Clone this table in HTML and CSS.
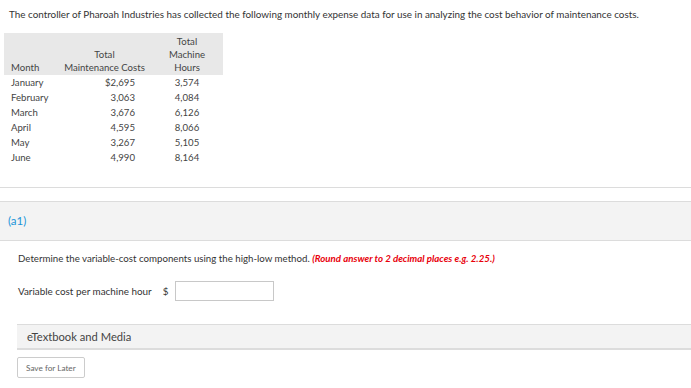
FILE: index.html
```html
<!DOCTYPE html>
<html lang="en">
<head>
    <meta charset="UTF-8">
    <title>Question</title>
    <link rel="stylesheet" href="styles.css">
</head>
<body>
    <div class="question">
        <p class="intro">The controller of Pharoah Industries has collected the following monthly expense data for use in analyzing the cost behavior of maintenance costs.</p>

        <table class="data">
            <thead>
                <tr>
                    <th class="month">Month</th>
                    <th class="costs">Total<br>Maintenance Costs</th>
                    <th class="hours">Total<br>Machine<br>Hours</th>
                </tr>
            </thead>
            <tbody>
                <tr><td>January</td><td class="num">$2,695</td><td class="mid">3,574</td></tr>
                <tr><td>February</td><td class="num">3,063</td><td class="mid">4,084</td></tr>
                <tr><td>March</td><td class="num">3,676</td><td class="mid">6,126</td></tr>
                <tr><td>April</td><td class="num">4,595</td><td class="mid">8,066</td></tr>
                <tr><td>May</td><td class="num">3,267</td><td class="mid">5,105</td></tr>
                <tr><td>June</td><td class="num">4,990</td><td class="mid">8,164</td></tr>
            </tbody>
        </table>
    </div>

    <div class="part">
        <div class="part-head">(a1)</div>
        <div class="part-body">
            <p class="prompt">Determine the variable-cost components using the high-low method. <em class="hint">(Round answer to 2 decimal places e.g. 2.25.)</em></p>
            <div class="answer">
                <label for="varCost">Variable cost per machine hour</label>
                <span class="currency">$</span>
                <input type="text" id="varCost">
            </div>
            <div class="media">eTextbook and Media</div>
            <button class="save">Save for Later</button>
        </div>
    </div>
</body>
</html>
```

FILE: styles.css
```css
body {
    margin: 0;
    font-family: Lato, "Open Sans", sans-serif;
    color: #333;
    background: #fff;
}
.question {
    padding: 9px 0 22px;
    border-bottom: 1px solid #dcdcdc;
}
.intro {
    margin: 0 0 13px 9px;
    font-size: 9.9px;
    line-height: 11px;
}
.data {
    margin-left: 4px;
    border-collapse: collapse;
    font-size: 9.6px;
    color: #444;
}
.data th {
    background: #e8e8e8;
    font-weight: normal;
    line-height: 13px;
    vertical-align: bottom;
    padding: 2px 0 1px;
}
.data th.month {
    text-align: left;
    padding-left: 7px;
    width: 44px;
}
.data th.costs {
    width: 99px;
}
.data th.hours {
    width: 66px;
    padding-right: 3px;
}
.data td {
    line-height: 15px;
    padding: 0 0 0 7px;
}
.data td.num {
    text-align: right;
    padding-right: 19px;
}
.data td.mid {
    text-align: center;
    padding: 0 3px 0 0;
}
.part {
    margin-top: 13px;
    border-top: 1px solid #dcdcdc;
}
.part-head {
    background: #f3f3f3;
    border-bottom: 1px solid #dcdcdc;
    color: #1a93d8;
    font-size: 11.5px;
    padding: 12px 8px 12px;
    line-height: 14px;
}
.part-body {
    padding: 11px 0 0 17px;
}
.prompt {
    margin: 0 0 0 1px;
    font-size: 9.7px;
    line-height: 12px;
}
.hint {
    color: #e8000b;
    font-weight: bold;
}
.answer {
    display: flex;
    align-items: center;
    margin: 17px 0 23px 1px;
    font-size: 9.9px;
}
.currency {
    margin: 0 7px 0 11px;
}
.answer input {
    width: 99px;
    height: 20px;
    box-sizing: border-box;
    border: 1px solid #c8c8c8;
    padding: 0 4px;
    font-family: inherit;
}
.media {
    background: #f3f3f3;
    border-top: 1px solid #dcdcdc;
    border-bottom: 2px solid #dcdcdc;
    font-size: 11.2px;
    color: #444;
    line-height: 23px;
    padding: 0 10px;
}
.save {
    margin-top: 7px;
    background: #fff;
    border: 1px solid #ccc;
    border-radius: 2px;
    font-family: inherit;
    font-size: 8.2px;
    color: #666;
    height: 21px;
    padding: 0 8px;
}
```
